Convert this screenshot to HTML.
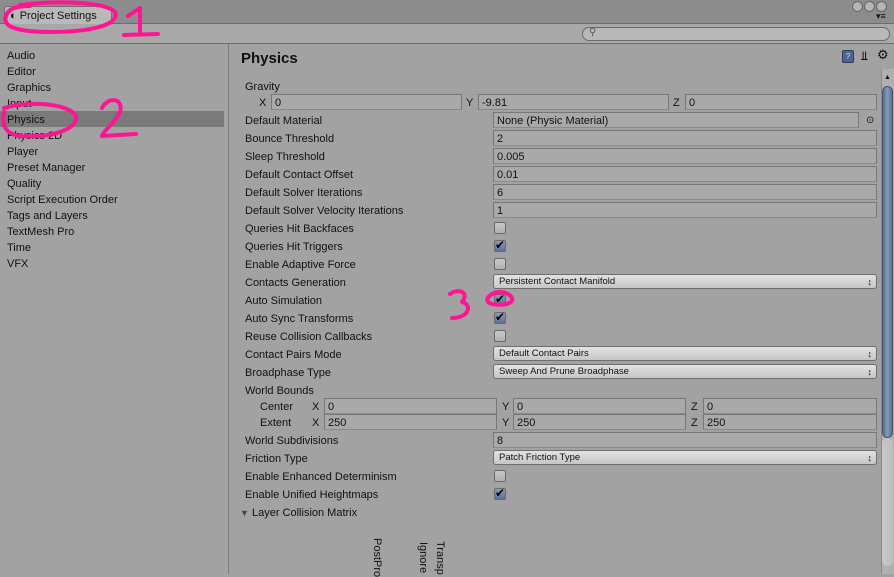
<!DOCTYPE html>
<html><head><style>
*{margin:0;padding:0;box-sizing:border-box}
body{width:894px;height:574px;overflow:hidden;background:#a2a2a2;font-family:"Liberation Sans",sans-serif;font-size:11px;color:#111;position:relative}
.a{position:absolute;white-space:nowrap}
.t{position:absolute;height:16px;line-height:18px;white-space:nowrap}
.f{position:absolute;height:16px;line-height:16px;background:#a9a9a9;border:1px solid #777;border-bottom-color:#8a8a8a;padding-left:3px;white-space:nowrap;overflow:hidden}
.p{position:absolute;height:15px;line-height:14px;background:linear-gradient(#e2e2e2,#c6c6c6);border:1px solid #6e6e6e;border-radius:3px;padding-left:5px;font-size:9.5px;white-space:nowrap}
.p:after{content:"\2195";position:absolute;right:4px;top:0;font-size:9px}
.c{position:absolute;width:12px;height:12px;border:1px solid #6a6a6a;border-radius:2px;background:linear-gradient(#c8c8c8,#b0b0b0)}
.c.on{background:linear-gradient(#8a9ab8,#5f7196)}
.c.on:after{content:"\2714";position:absolute;left:0px;top:-3px;font-size:12px;color:#000}
.l{position:absolute;left:7px;height:16px;line-height:18px}
</style></head><body>
<div class="a" style="left:0;top:0;width:894px;height:24px;background:#8c8c8c;border-bottom:1px solid #6c6c6c"></div>
<div class="a" style="left:4px;top:6px;width:108px;height:19px;background:#b9b9b9;border:1px solid #707070;border-bottom:none;border-radius:3px 3px 0 0"></div>
<div class="a" style="left:10px;top:10px;font-size:11px">◐ Project Settings</div>
<div class="a" style="left:852px;top:1px;width:42px;height:12px">
<span style="display:inline-block;width:11px;height:11px;border-radius:50%;border:1px solid #666;background:#b5b5b5;margin-right:1px"></span><span style="display:inline-block;width:11px;height:11px;border-radius:50%;border:1px solid #666;background:#b5b5b5;margin-right:1px"></span><span style="display:inline-block;width:11px;height:11px;border-radius:50%;border:1px solid #666;background:#b5b5b5"></span></div>
<div class="a" style="left:876px;top:11px;font-size:9px">▾≡</div>
<div class="a" style="left:0;top:24px;width:894px;height:20px;background:#a8a8a8;border-bottom:1px solid #6e6e6e"></div>
<div class="a" style="left:582px;top:27px;width:308px;height:14px;border:1px solid #6a6a6a;border-radius:7px;background:#b8b8b8"></div>
<div class="a" style="left:589px;top:27px;font-size:10px;color:#555">⚲</div>
<div class="a" style="left:228px;top:44px;width:1px;height:530px;background:#7e7e7e"></div>
<div class="a" style="left:0;top:111px;width:224px;height:16px;background:#7a7a7a"></div>
<div class="l" style="top:47px">Audio</div>
<div class="l" style="top:63px">Editor</div>
<div class="l" style="top:79px">Graphics</div>
<div class="l" style="top:95px">Input</div>
<div class="l" style="top:111px">Physics</div>
<div class="l" style="top:127px">Physics 2D</div>
<div class="l" style="top:143px">Player</div>
<div class="l" style="top:159px">Preset Manager</div>
<div class="l" style="top:175px">Quality</div>
<div class="l" style="top:191px">Script Execution Order</div>
<div class="l" style="top:207px">Tags and Layers</div>
<div class="l" style="top:223px">TextMesh Pro</div>
<div class="l" style="top:239px">Time</div>
<div class="l" style="top:255px">VFX</div>
<div class="a" style="left:241px;top:50px;font-size:15px;font-weight:bold">Physics</div>
<div class="a" style="left:842px;top:50px;width:12px;height:13px;background:#4d6690;border:1px solid #2c3d5a;border-radius:2px;color:#cde;font-size:8px;text-align:center;line-height:11px">?</div>
<div class="a" style="left:861px;top:49px;font-size:12px;font-weight:bold">⫫</div>
<div class="a" style="left:877px;top:47px;font-size:13px">⚙</div>
<div class="a" style="left:881px;top:69px;width:13px;height:505px;background:#b0b0b0;border-left:1px solid #8a8a8a"></div>
<div class="a" style="left:884px;top:74px;font-size:7px">▲</div>
<div class="a" style="left:882px;top:86px;width:11px;height:352px;border-radius:6px;background:linear-gradient(90deg,#5a6d8e,#8799b8,#5a6d8e);border:1px solid #44546f"></div>
<div class="a" style="left:882px;top:438px;width:11px;height:128px;border-radius:6px;background:linear-gradient(90deg,#c8c8c8,#bdbdbd)"></div>
<div class="t" style="left:245px;top:78px">Gravity</div>
<div class="t" style="left:259px;top:94px">X</div><div class="f" style="left:271px;top:94px;width:191px">0</div>
<div class="t" style="left:466px;top:94px">Y</div><div class="f" style="left:478px;top:94px;width:191px">-9.81</div>
<div class="t" style="left:673px;top:94px">Z</div><div class="f" style="left:685px;top:94px;width:192px">0</div>
<div class="t" style="left:245px;top:112px">Default Material</div><div class="f" style="left:493px;top:112px;width:366px">None (Physic Material)</div>
<div class="t" style="left:866px;top:112px;font-size:10px">⊙</div>
<div class="t" style="left:245px;top:130px">Bounce Threshold</div><div class="f" style="left:493px;top:130px;width:384px">2</div>
<div class="t" style="left:245px;top:148px">Sleep Threshold</div><div class="f" style="left:493px;top:148px;width:384px">0.005</div>
<div class="t" style="left:245px;top:166px">Default Contact Offset</div><div class="f" style="left:493px;top:166px;width:384px">0.01</div>
<div class="t" style="left:245px;top:184px">Default Solver Iterations</div><div class="f" style="left:493px;top:184px;width:384px">6</div>
<div class="t" style="left:245px;top:202px">Default Solver Velocity Iterations</div><div class="f" style="left:493px;top:202px;width:384px">1</div>
<div class="t" style="left:245px;top:220px">Queries Hit Backfaces</div><div class="c" style="left:494px;top:222px"></div>
<div class="t" style="left:245px;top:238px">Queries Hit Triggers</div><div class="c on" style="left:494px;top:240px"></div>
<div class="t" style="left:245px;top:256px">Enable Adaptive Force</div><div class="c" style="left:494px;top:258px"></div>
<div class="t" style="left:245px;top:274px">Contacts Generation</div><div class="p" style="left:493px;top:274px;width:384px">Persistent Contact Manifold</div>
<div class="t" style="left:245px;top:292px">Auto Simulation</div><div class="c on" style="left:494px;top:294px"></div>
<div class="t" style="left:245px;top:310px">Auto Sync Transforms</div><div class="c on" style="left:494px;top:312px"></div>
<div class="t" style="left:245px;top:328px">Reuse Collision Callbacks</div><div class="c" style="left:494px;top:330px"></div>
<div class="t" style="left:245px;top:346px">Contact Pairs Mode</div><div class="p" style="left:493px;top:346px;width:384px">Default Contact Pairs</div>
<div class="t" style="left:245px;top:364px">Broadphase Type</div><div class="p" style="left:493px;top:364px;width:384px">Sweep And Prune Broadphase</div>
<div class="t" style="left:245px;top:382px">World Bounds</div>
<div class="t" style="left:260px;top:398px">Center</div>
<div class="t" style="left:312px;top:398px">X</div><div class="f" style="left:324px;top:398px;width:173px">0</div>
<div class="t" style="left:502px;top:398px">Y</div><div class="f" style="left:513px;top:398px;width:173px">0</div>
<div class="t" style="left:691px;top:398px">Z</div><div class="f" style="left:703px;top:398px;width:174px">0</div>
<div class="t" style="left:260px;top:414px">Extent</div>
<div class="t" style="left:312px;top:414px">X</div><div class="f" style="left:324px;top:414px;width:173px">250</div>
<div class="t" style="left:502px;top:414px">Y</div><div class="f" style="left:513px;top:414px;width:173px">250</div>
<div class="t" style="left:691px;top:414px">Z</div><div class="f" style="left:703px;top:414px;width:174px">250</div>
<div class="t" style="left:245px;top:432px">World Subdivisions</div><div class="f" style="left:493px;top:432px;width:384px">8</div>
<div class="t" style="left:245px;top:450px">Friction Type</div><div class="p" style="left:493px;top:450px;width:384px">Patch Friction Type</div>
<div class="t" style="left:245px;top:468px">Enable Enhanced Determinism</div><div class="c" style="left:494px;top:470px"></div>
<div class="t" style="left:245px;top:486px">Enable Unified Heightmaps</div><div class="c on" style="left:494px;top:488px"></div>
<div class="t" style="left:240px;top:504px"><span style="font-size:9px;color:#444">▼</span> Layer Collision Matrix</div>
<div class="a" style="left:371px;top:538px;writing-mode:vertical-rl">PostPro</div>
<div class="a" style="left:417px;top:542px;writing-mode:vertical-rl">Ignore</div>
<div class="a" style="left:434px;top:541px;writing-mode:vertical-rl">Transp</div>
<svg class="a" style="left:0;top:0" width="894" height="574" fill="none" stroke="#ff1493" stroke-width="4" stroke-linecap="round" stroke-linejoin="round">
<path d="M20 5 C60 0 105 2 115 12 C120 25 90 32 50 32 C15 32 2 26 6 16 C8 8 18 6 30 6"/>
<path d="M128 16 L140 8 L140 34 M124 35 L158 34"/>
<path d="M4 108 C30 100 70 104 76 116 C78 130 50 138 20 136 C4 134 2 124 4 112"/>
<path d="M102 108 C108 96 124 98 120 112 C114 124 104 130 102 136 L136 134"/>
<path d="M450 294 C458 288 470 292 462 302 C472 304 470 318 452 318"/>
<path d="M488 298 C492 290 508 290 512 298 C514 304 502 306 492 304 C486 302 486 298 490 296"/>
</svg>
</body></html>
